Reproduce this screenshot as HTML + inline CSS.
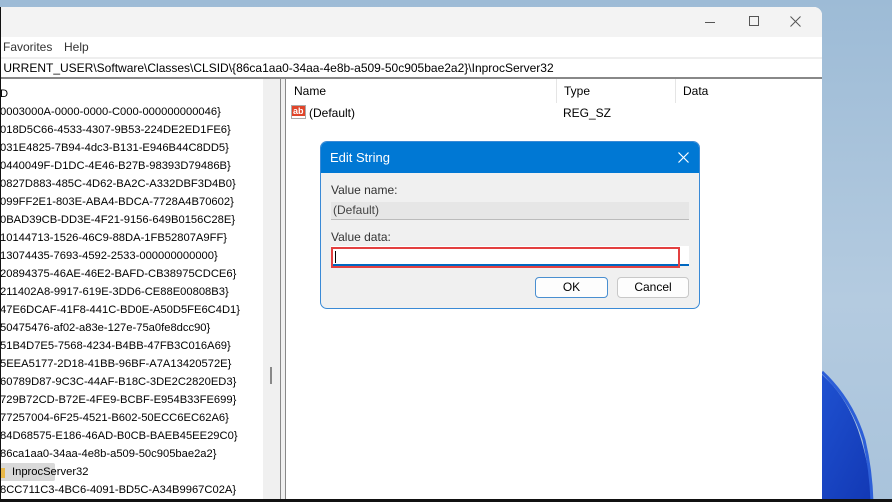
<!DOCTYPE html>
<html style="width:892px;height:502px;overflow:hidden"><head><meta charset="utf-8"><style>
*{margin:0;padding:0;box-sizing:border-box}
body{width:892px;height:502px;overflow:hidden;position:relative;background:linear-gradient(180deg,#9dbbd6,#b4cbe0 60%,#a9c3db);font-family:"Liberation Sans",sans-serif;color:#000}
.abs{position:absolute}
.win{left:0;top:7px;width:822px;height:492px;background:#fff;border-top-right-radius:8px;overflow:hidden}
.tb{left:0;top:0;width:822px;height:30px;background:#f3f3f3}
.menu{top:30px;left:0;width:822px;height:20px;background:#fff;font-size:12px;color:#333}
.addr{top:50px;left:0;width:822px;height:22px;background:#fff;border-top:2px solid #eee;border-bottom:2px solid #888;font-size:12px;line-height:19px;white-space:nowrap}
.tree{left:0;top:79px;width:263px;height:413px;background:#fff;font-size:11.2px}
.tree div{position:absolute;left:0;white-space:nowrap}
.sb{left:263px;top:72px;width:17px;height:420px;background:#f0f0f0}
.split{left:280px;top:72px;width:6px;height:420px;background:#f0f0f0;border-left:1px solid #888;border-right:1px solid #888}
.list{left:286px;top:72px;width:536px;height:420px;background:#fff;font-size:12px}
.dlg{left:320px;top:141px;width:380px;height:168px;background:#f0f0f0;border:1px solid #3a8ad6;border-radius:7px;overflow:hidden;font-size:12px}
.dt{left:0;top:0;width:378px;height:31px;background:#0078d4;color:#fff;font-size:13px;line-height:31px;padding-left:9px}
.btn{height:21px;background:#fdfdfd;border:1px solid #c8c8c8;border-radius:4px;text-align:center;line-height:19px;font-size:12px}
</style></head><body>
<svg class="abs" style="left:0;top:0" width="892" height="502">
<defs><linearGradient id="g" x1="0" y1="0" x2="1" y2="1"><stop offset="0" stop-color="#2258d8"/><stop offset="1" stop-color="#1238b4"/></linearGradient></defs>
<path d="M800 360 Q840 380 858 430 Q870 465 872 502 L800 502 Z" fill="url(#g)"/>
<path d="M822 372 Q852 400 864 440 Q871 470 872 502" fill="none" stroke="#2d5fd8" stroke-width="3"/>
</svg>
<div class="abs win">
 <div class="abs tb">
  <div class="abs" style="left:705px;top:15px;width:10px;height:1px;background:#555"></div>
  <div class="abs" style="left:749px;top:9px;width:10px;height:10px;border:1px solid #555"></div>
  <svg class="abs" style="left:790px;top:9px" width="11" height="11"><path d="M0.5 0.5L10.5 10.5M10.5 0.5L0.5 10.5" stroke="#555" stroke-width="1"/></svg>
 </div>
 <div class="abs menu"><span class="abs" style="left:3px;top:3px">Favorites</span><span class="abs" style="left:64px;top:3px">Help</span></div>
 <div class="abs addr">&nbsp;URRENT_USER\Software\Classes\CLSID\{86ca1aa0-34aa-4e8b-a509-50c905bae2a2}\InprocServer32</div>
 <div class="abs tree">
  <div style="top:2px">D</div>
  <div style="top:20px">0003000A-0000-0000-C000-000000000046}</div>
  <div style="top:38px">018D5C66-4533-4307-9B53-224DE2ED1FE6}</div>
  <div style="top:56px">031E4825-7B94-4dc3-B131-E946B44C8DD5}</div>
  <div style="top:74px">0440049F-D1DC-4E46-B27B-98393D79486B}</div>
  <div style="top:92px">0827D883-485C-4D62-BA2C-A332DBF3D4B0}</div>
  <div style="top:110px">099FF2E1-803E-ABA4-BDCA-7728A4B70602}</div>
  <div style="top:128px">0BAD39CB-DD3E-4F21-9156-649B0156C28E}</div>
  <div style="top:146px">10144713-1526-46C9-88DA-1FB52807A9FF}</div>
  <div style="top:164px">13074435-7693-4592-2533-000000000000}</div>
  <div style="top:182px">20894375-46AE-46E2-BAFD-CB38975CDCE6}</div>
  <div style="top:200px">211402A8-9917-619E-3DD6-CE88E00808B3}</div>
  <div style="top:218px">47E6DCAF-41F8-441C-BD0E-A50D5FE6C4D1}</div>
  <div style="top:236px">50475476-af02-a83e-127e-75a0fe8dcc90}</div>
  <div style="top:254px">51B4D7E5-7568-4234-B4BB-47FB3C016A69}</div>
  <div style="top:272px">5EEA5177-2D18-41BB-96BF-A7A13420572E}</div>
  <div style="top:290px">60789D87-9C3C-44AF-B18C-3DE2C2820ED3}</div>
  <div style="top:308px">729B72CD-B72E-4FE9-BCBF-E954B33FE699}</div>
  <div style="top:326px">77257004-6F25-4521-B602-50ECC6EC62A6}</div>
  <div style="top:344px">84D68575-E186-46AD-B0CB-BAEB45EE29C0}</div>
  <div style="top:362px">86ca1aa0-34aa-4e8b-a509-50c905bae2a2}</div>
  <div style="top:377px;height:18px;width:55px;background:#d9d9d9;border-radius:2px"></div>
  <div style="top:382px;left:0;width:5px;height:10px;background:#e8b84a"></div>
  <div style="top:380px;left:12px">InprocServer32</div>
  <div style="top:398px">8CC711C3-4BC6-4091-BD5C-A34B9967C02A}</div>
 </div>
 <div class="abs sb"><div class="abs" style="left:7px;top:288px;width:2px;height:17px;background:#888"></div></div>
 <div class="abs split"></div>
 <div class="abs list">
  <div class="abs" style="left:8px;top:5px">Name</div>
  <div class="abs" style="left:270px;top:0;width:1px;height:24px;background:#e5e5e5"></div>
  <div class="abs" style="left:278px;top:5px">Type</div>
  <div class="abs" style="left:389px;top:0;width:1px;height:24px;background:#e5e5e5"></div>
  <div class="abs" style="left:397px;top:5px">Data</div>
  <div class="abs" style="left:5px;top:26px;width:15px;height:14px;border:1px solid #aaa;background:#fff;font-size:9px;font-weight:bold;color:#fff"><span style="background:#e0452a;padding:0 1px">ab</span></div>
  <div class="abs" style="left:23px;top:27px">(Default)</div>
  <div class="abs" style="left:277px;top:27px">REG_SZ</div>
 </div>
</div>
<div class="abs" style="left:0;top:499px;width:892px;height:3px;background:#111"></div>
<div class="abs" style="left:0;top:7px;width:1px;height:492px;background:#111"></div>
<div class="abs dlg">
 <div class="abs dt">Edit String<svg class="abs" style="left:357px;top:10px" width="11" height="11"><path d="M0.5 0.5L10.5 10.5M10.5 0.5L0.5 10.5" stroke="#fff" stroke-width="1.2"/></svg></div>
 <div class="abs" style="left:10px;top:41px;color:#333">Value name:</div>
 <div class="abs" style="left:10px;top:60px;width:358px;height:18px;background:#e6e6e6;border-bottom:1px solid #bbb;padding-left:2px;line-height:17px;color:#444">(Default)</div>
 <div class="abs" style="left:10px;top:88px;color:#333">Value data:</div>
 <div class="abs" style="left:10px;top:104px;width:358px;height:20px;background:#fff;border-bottom:2px solid #0067c0"></div>
 <div class="abs" style="left:10px;top:105px;width:349px;height:21px;border:2px solid #e34040"></div>
 <div class="abs" style="left:14px;top:109px;width:1px;height:12px;background:#000"></div>
 <div class="abs btn" style="left:214px;top:135px;width:73px;border-color:#4a8fd0">OK</div>
 <div class="abs btn" style="left:296px;top:135px;width:72px">Cancel</div>
</div>
</body></html>
